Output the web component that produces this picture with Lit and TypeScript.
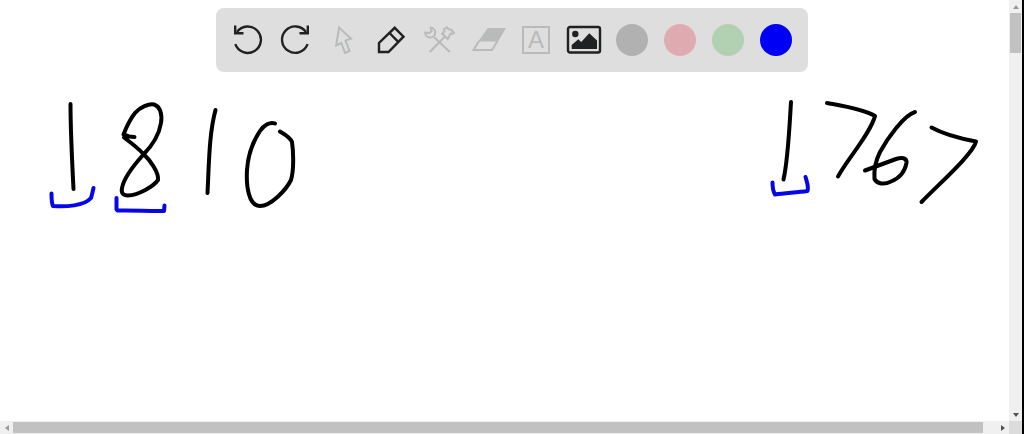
import { LitElement, html, svg, css } from "lit";
import { customElement, property, state } from "lit/decorators.js";

interface Tool {
  id: string;
  label: string;
  muted?: boolean;
}

interface Stroke {
  ink: "black" | "blue";
  d: string;
}

const TOOLS: Tool[] = [
  { id: "undo", label: "Undo" },
  { id: "redo", label: "Redo" },
  { id: "select", label: "Select", muted: true },
  { id: "pen", label: "Pen" },
  { id: "tools", label: "Tools", muted: true },
  { id: "eraser", label: "Eraser", muted: true },
  { id: "text", label: "Text", muted: true },
  { id: "image", label: "Image" },
];

const COLOURS = [
  { id: "grey", label: "Grey" },
  { id: "pink", label: "Pink" },
  { id: "green", label: "Green" },
  { id: "blue", label: "Blue" },
];

// Pen strokes in canvas pixels, in the order they were drawn.
const STROKES: Stroke[] = [
  { ink: "black", d: "M70.5 104 C70.5 130 72 160 73.5 189" },
  { ink: "black", d: "M134.5 137 L129 136.5 L123.5 134.5 C126 128 131 118 135 113 C140 107 149 103.5 154 104.5 C160 106.5 162.5 114 161 123 C159 135 151 147 143 155 C134 165 124 177 122 188 C121 193 123 195.5 128 195.5 C138 195 153 187 158 180 C159 173 151 161 143 153.5 C138 148 130 142 124 137.5" },
  { ink: "black", d: "M215.5 110 C209 134 209 164 207.5 193" },
  { ink: "black", d: "M275 123.5 C270 121.5 264 125 260 131 C252 143 248 155 247 170 C246 187 249 206 260 206 C271 206 286 190 291 180 C294 170 293.5 152 292 142 C290 137 285 134.5 280 131.5" },
  { ink: "black", d: "M791 102 C789.5 126 788 160 783.5 179.5" },
  { ink: "black", d: "M827 103 C843 106 863 109 875 116 C870 134 849 157 838 176.5" },
  { ink: "black", d: "M915 112 C904 115 887 139 880 152 C875 162 874 173 874.5 179 C877 184 884 185 891 181.5 C900 178 905 171 906.5 163 C907 157 901 157.5 896 159 L865 170.5" },
  { ink: "black", d: "M931.5 127.5 C945 135 960 138.5 976 141.5 C973 154 940 183 921.5 202" },
  { ink: "blue", d: "M51.5 193.5 C51.5 199 51.5 203 53 206 C66 207 84 206 91 198 C92 195 92.5 192 93.5 188" },
  { ink: "blue", d: "M116.5 198 L116.5 209 Q117 210.5 119 210.5 C134 210 150 211.5 164 211 L164.5 205.5" },
  { ink: "blue", d: "M772.5 182.5 C772.5 187 773 191 775 194.5 C786 193 797 192.5 807.5 191 C809 187 807 182 805.5 177" },
];

const ICONS: Record<string, unknown> = {
  undo: svg`<path d="M3.3 20.2 A13.2 13.2 0 1 0 5 8"/><path d="M3.2 1.5 V9.2 H11.5"/>`,
  redo: svg`<path d="M27.6 20.2 A13.2 13.2 0 1 1 26 8"/><path d="M27.8 1.5 V9.2 H19.5"/>`,
  select: svg`<path d="M11 3.5 L23 14.5 L17.5 16.5 L21.5 27 L17 29 L13.3 19 L8.2 21.5 Z"/>`,
  pen: svg`<path d="M3 28 V19 L18.7 3.8 L27.5 12.7 L12.5 28 Z M13.5 9 L22 17.7"/>`,
  tools: svg`<path d="M10 13 L25.7 28 M5.7 28 L20.7 12.7"/>
    <path d="M6.8 3.6 A5 5 0 1 1 1.2 8.5 L5.5 9 L7.6 7.2 Z"/>
    <path d="M18.2 9.8 L20.5 7.5 L19.8 5.2 L23 3.4 L24.5 5.2 L27 5.5 L30 8.7 L28.5 10 L26.5 9.6 L23.8 15 Z"/>`,
  eraser: svg`<path class="solid" d="M15.8 4 H34 L26 17.5 H6.2 Z"/><path d="M7 17 L1.5 26 H20 L25.5 17"/>`,
  image: svg`<rect x="0" y="3" width="32" height="25.5" rx="2"/><circle class="solid" cx="7.3" cy="10" r="3.2"/>
    <path class="solid" d="M3.7 25 V21 L10.3 15.3 L13.2 18 L21.3 9.2 L29 16.5 V25 Z"/>`,
};

@customElement("board-toolbar")
class BoardToolbar extends LitElement {
  @state() private colour = "blue";

  static styles = css`
    :host {
      display: block;
    }
    .bar {
      display: flex;
      align-items: center;
      height: 64px;
      padding: 0 8px;
      box-sizing: border-box;
      border-radius: 8px;
      background: #dedede;
    }
    button {
      display: flex;
      align-items: center;
      justify-content: center;
      width: 48px;
      height: 48px;
      padding: 0;
      border: 0;
      background: none;
      color: #202122;
      cursor: pointer;
    }
    .muted {
      color: #b9baba;
    }
    svg {
      width: 32px;
      height: 32px;
      overflow: visible;
      fill: none;
      stroke: currentColor;
      stroke-width: 2.4;
    }
    .muted svg {
      stroke-width: 2;
    }
    svg .solid {
      fill: currentColor;
      stroke: none;
    }
    .letter {
      display: flex;
      align-items: center;
      justify-content: center;
      width: 28px;
      height: 28px;
      box-sizing: border-box;
      border: 2px solid currentColor;
      font: 24px/24px "Liberation Sans", Arial, sans-serif;
    }
    .swatch {
      width: 32px;
      height: 32px;
      border-radius: 50%;
    }
    .grey {
      background: #b1b1b1;
    }
    .pink {
      background: #e0abb0;
    }
    .green {
      background: #b2d1b2;
    }
    .blue {
      background: #0000f5;
    }
  `;

  render() {
    return html`<div class="bar" role="toolbar" aria-label="Drawing tools">
      ${TOOLS.map(
        (tool) => html`<button class=${tool.muted ? "muted" : ""} aria-label=${tool.label}>
          ${tool.id === "text"
            ? html`<span class="letter">A</span>`
            : html`<svg viewBox="0 0 32 32" aria-hidden="true">${ICONS[tool.id]}</svg>`}
        </button>`
      )}
      ${COLOURS.map(
        (c) => html`<button
          aria-label=${c.label}
          aria-pressed=${this.colour === c.id}
          @click=${() => (this.colour = c.id)}
        ><span class="swatch ${c.id}"></span></button>`
      )}
    </div>`;
  }
}

@customElement("board-scrollbar")
class BoardScrollbar extends LitElement {
  @property({ reflect: true }) direction = "vertical";

  static styles = css`
    :host {
      display: flex;
      background: #f0f0f0;
    }
    :host([direction="vertical"]) {
      flex-direction: column;
    }
    button {
      display: flex;
      align-items: center;
      justify-content: center;
      flex: none;
      width: 13px;
      height: 13px;
      padding: 0;
      border: 0;
      background: none;
      color: #505050;
    }
    .start {
      color: #999999;
    }
    svg {
      width: 6px;
      height: 6px;
      fill: currentColor;
    }
    .track {
      display: flex;
      flex: 1;
      flex-direction: inherit;
    }
    .thumb {
      background: #c1c1c1;
    }
    :host([direction="vertical"]) .thumb {
      height: 10%;
      margin: 0 1px;
    }
    :host([direction="horizontal"]) .thumb {
      width: 98.7%;
      margin: 1px 0;
    }
  `;

  render() {
    const vertical = this.direction === "vertical";
    return html`
      <button class="start" aria-label=${vertical ? "Scroll up" : "Scroll left"}>
        <svg viewBox="0 0 6 6"><path d=${vertical ? "M0 5 L3 1 L6 5 Z" : "M5 0 L1 3 L5 6 Z"} /></svg>
      </button>
      <div class="track"><div class="thumb"></div></div>
      <button aria-label=${vertical ? "Scroll down" : "Scroll right"}>
        <svg viewBox="0 0 6 6"><path d=${vertical ? "M0 1 L3 5 L6 1 Z" : "M1 0 L5 3 L1 6 Z"} /></svg>
      </button>
    `;
  }
}

@customElement("app-root")
class AppRoot extends LitElement {
  static styles = css`
    :host {
      display: grid;
      position: relative;
      grid-template-columns: minmax(0, 1fr) 13px;
      grid-template-rows: minmax(0, 1fr) 13px;
      height: 100vh;
      box-sizing: border-box;
      padding-right: 2px;
      box-shadow: inset -2px 0 #000000;
      background: #ffffff;
    }
    .toolbar {
      position: absolute;
      top: 8px;
      left: 50%;
      transform: translateX(-50%);
    }
    .canvas {
      display: block;
      width: 100%;
      height: 100%;
      fill: none;
      stroke-linecap: round;
      stroke-linejoin: round;
      stroke-width: 4;
    }
    .black {
      stroke: #000000;
    }
    .blue {
      stroke: #0606e6;
    }
    .corner {
      background: #dcdcdc;
    }
  `;

  render() {
    return html`
      <svg class="canvas" role="img" aria-label="Handwritten numbers 1810 and 1767">
        ${STROKES.map((s) => svg`<path class=${s.ink} d=${s.d} />`)}
      </svg>
      <board-scrollbar direction="vertical"></board-scrollbar>
      <board-scrollbar direction="horizontal"></board-scrollbar>
      <div class="corner"></div>
      <board-toolbar class="toolbar"></board-toolbar>
    `;
  }
}
